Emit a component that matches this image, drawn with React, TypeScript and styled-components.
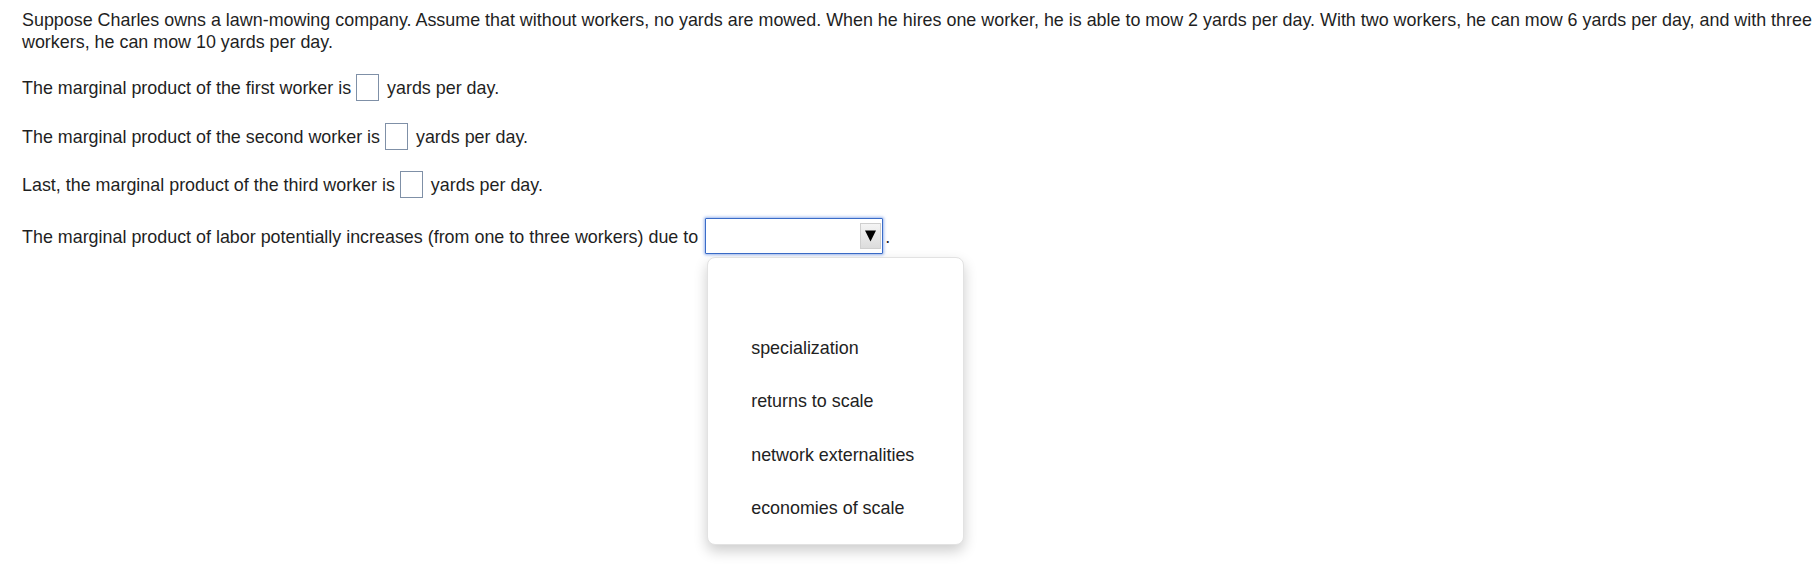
import React from "react";
import styled, { createGlobalStyle } from "styled-components";

const GlobalStyle = createGlobalStyle`
  html, body {
    margin: 0;
    padding: 0;
    background: #ffffff;
  }
  body {
    font-family: "Liberation Sans", Arial, sans-serif;
    color: #1f1f1f;
  }
`;

const Page = styled.div`
  display: flex;
  flex-direction: column;
  padding: 9px 0 0 22px;
  min-height: 558px;
  font-size: 17.9px;
  line-height: 22px;
  color: #1f1f1f;
`;

const Paragraph = styled.p`
  margin: 0;
`;

const Row = styled.div<{ $mt: number }>`
  margin-top: ${(p) => p.$mt}px;
  white-space: nowrap;
`;

const Blank = styled.span`
  display: inline-block;
  box-sizing: border-box;
  width: 23px;
  height: 27px;
  border: 1px solid #7f90a7;
  background: #ffffff;
  vertical-align: -7px;
  margin-right: 3px;
`;

const SelectWrap = styled.span`
  position: relative;
  display: inline-block;
  font-size: 0;
  line-height: 0;
  vertical-align: -11px;
  margin: 0 2px 0 7px;
`;

const SelectBox = styled.span`
  display: inline-block;
  box-sizing: border-box;
  width: 178px;
  height: 36px;
  overflow: hidden;
  border: 1px solid #3a6cc8;
  border-radius: 1px;
  box-shadow: 0 0 3px 1px rgba(72, 122, 222, 0.55);
  background: #ffffff;
`;

const SelectInner = styled.span`
  display: flex;
  height: 100%;
  align-items: center;
  justify-content: flex-end;
  padding-right: 1px;
`;

const ArrowButton = styled.span`
  display: flex;
  align-items: center;
  justify-content: center;
  box-sizing: border-box;
  width: 21px;
  height: 26px;
  border: 1px solid #cfcfcf;
  background: linear-gradient(#f4f4f4, #dcdcdc);
`;

const Menu = styled.div`
  position: absolute;
  top: calc(100% + 3px);
  left: 2px;
  z-index: 10;
  box-sizing: border-box;
  width: 257px;
  padding: 10px 0;
  background: #ffffff;
  border: 1px solid #e2e2e2;
  border-radius: 8px;
  box-shadow: 0 6px 14px rgba(0, 0, 0, 0.2);
  font-size: 17.9px;
  line-height: 22px;
`;

const Option = styled.div`
  display: flex;
  align-items: center;
  height: 53.3px;
  padding-left: 43px;
  color: #222222;
`;

const options = [
  "",
  "specialization",
  "returns to scale",
  "network externalities",
  "economies of scale",
];

export default function App() {
  return (
    <>
      <GlobalStyle />
      <Page>
        <Paragraph>
          Suppose Charles owns a lawn-mowing company. Assume that without
          workers, no yards are mowed. When he hires one worker, he is able to
          mow 2 yards per day. With two workers, he can mow 6 yards per day,
          and with three workers, he can mow 10 yards per day.
        </Paragraph>
        <Row $mt={21}>
          The marginal product of the first worker is <Blank /> yards per day.
        </Row>
        <Row $mt={22}>
          The marginal product of the second worker is <Blank /> yards per
          day.
        </Row>
        <Row $mt={21}>
          Last, the marginal product of the third worker is <Blank /> yards
          per day.
        </Row>
        <Row $mt={20}>
          The marginal product of labor potentially increases (from one to
          three workers) due to
          <SelectWrap>
            <SelectBox>
              <SelectInner>
                <ArrowButton>
                  <svg width="11" height="12" viewBox="0 0 11 12">
                    <polygon points="0,0.5 11,0.5 5.5,11.5" fill="#000" />
                  </svg>
                </ArrowButton>
              </SelectInner>
            </SelectBox>
            <Menu>
              {options.map((o, i) => (
                <Option key={i}>{o}</Option>
              ))}
            </Menu>
          </SelectWrap>
          .
        </Row>
      </Page>
    </>
  );
}
